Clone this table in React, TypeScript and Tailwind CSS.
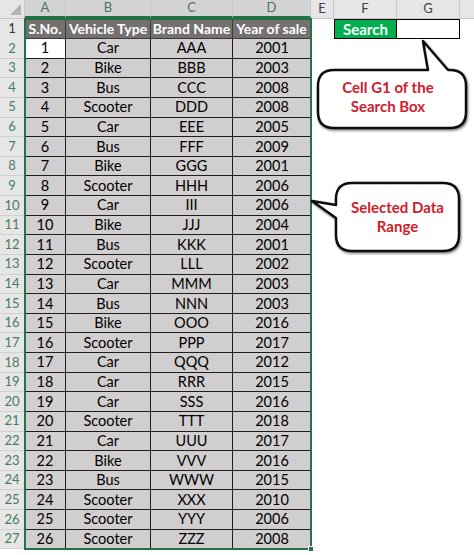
import React from "react";

const data: [number, string, string, number][] = [
  [1, "Car", "AAA", 2001],
  [2, "Bike", "BBB", 2003],
  [3, "Bus", "CCC", 2008],
  [4, "Scooter", "DDD", 2008],
  [5, "Car", "EEE", 2005],
  [6, "Bus", "FFF", 2009],
  [7, "Bike", "GGG", 2001],
  [8, "Scooter", "HHH", 2006],
  [9, "Car", "III", 2006],
  [10, "Bike", "JJJ", 2004],
  [11, "Bus", "KKK", 2001],
  [12, "Scooter", "LLL", 2002],
  [13, "Car", "MMM", 2003],
  [14, "Bus", "NNN", 2003],
  [15, "Bike", "OOO", 2016],
  [16, "Scooter", "PPP", 2017],
  [17, "Car", "QQQ", 2012],
  [18, "Car", "RRR", 2015],
  [19, "Car", "SSS", 2016],
  [20, "Scooter", "TTT", 2018],
  [21, "Car", "UUU", 2017],
  [22, "Bike", "VVV", 2016],
  [23, "Bus", "WWW", 2015],
  [24, "Scooter", "XXX", 2010],
  [25, "Scooter", "YYY", 2006],
  [26, "Scooter", "ZZZ", 2008],
];

const font = { fontFamily: "Lato, 'Open Sans', sans-serif" };

function ColHead({ label, w, sel }: { label: string; w: string; sel?: boolean }) {
  return (
    <div
      className={`${w} h-full flex items-center justify-center border-r border-[#c8c8c8] text-[13px] ${
        sel ? "bg-[#d3d3d3] text-[#4a7460] border-b-2 border-b-[#217346]" : "bg-[#e6e6e6] text-[#444]"
      }`}
    >
      {label}
    </div>
  );
}

export default function App() {
  return (
    <div className="relative w-[474px] h-[555px] bg-white overflow-hidden" style={font}>
      {/* column headers */}
      <div className="flex h-[19px] border-b border-[#c8c8c8]">
        <div className="w-[25px] h-full bg-[#e6e6e6] border-r border-[#c8c8c8] flex items-end justify-end p-[3px]">
          <svg width="11" height="11" viewBox="0 0 11 11">
            <polygon points="11,0 11,11 0,11" fill="#b4b4b4" />
          </svg>
        </div>
        <ColHead label="A" w="w-[41px]" sel />
        <ColHead label="B" w="w-[85px]" sel />
        <ColHead label="C" w="w-[82px]" sel />
        <ColHead label="D" w="w-[78px]" sel />
        <ColHead label="E" w="w-[23px]" />
        <ColHead label="F" w="w-[63px]" />
        <ColHead label="G" w="w-[63px]" />
        <div className="flex-1 h-full bg-[#e6e6e6]" />
      </div>

      {/* row 1 */}
      <div className="flex h-[20px]">
        <div className="w-[25px] h-full bg-[#e6e6e6] border-r border-[#c8c8c8] flex items-center justify-center text-[13px] text-[#333]">
          1
        </div>
        {[
          ["S.No.", "w-[41px]"],
          ["Vehicle Type", "w-[85px]"],
          ["Brand Name", "w-[82px]"],
          ["Year of sale", "w-[78px]"],
        ].map(([t, w]) => (
          <div
            key={t}
            className={`${w} h-full bg-[#767171] text-white font-bold text-[14px] flex items-center justify-center border-r border-b border-[#3a3a3a] whitespace-nowrap overflow-hidden`}
          >
            {t}
          </div>
        ))}
        <div className="w-[23px] h-full" />
        <div className="w-[63px] h-full bg-[#00b050] text-white font-bold text-[15px] flex items-center justify-center border border-black">
          Search
        </div>
        <div className="w-[63px] h-full bg-white border-y border-r border-black" />
        <div className="flex-1" />
      </div>

      {/* data rows */}
      {data.map(([n, v, b, y], i) => (
        <div key={n} className="flex h-[19.63px]">
          <div className="w-[25px] h-full bg-[#e6e6e6] border-r border-b border-[#d0d0d0] flex items-center justify-center text-[13px] text-[#4a7a60]">
            {i + 2}
          </div>
          <div
            className={`w-[41px] h-full ${i === 0 ? "bg-white" : "bg-[#d0cece]"} border-r border-b border-[#1e1e1e] flex items-center justify-center text-[14.5px] text-black`}
          >
            {n}
          </div>
          <div className="w-[85px] h-full bg-[#d0cece] border-r border-b border-[#1e1e1e] flex items-center justify-center text-[14.5px] text-black">
            {v}
          </div>
          <div className="w-[82px] h-full bg-[#d0cece] border-r border-b border-[#1e1e1e] flex items-center justify-center text-[14.5px] text-black">
            {b}
          </div>
          <div className="w-[78px] h-full bg-[#d0cece] border-b border-[#1e1e1e] flex items-center justify-center text-[14.5px] text-black">
            {y}
          </div>
          <div className="flex-1" />
        </div>
      ))}

      {/* selection border */}
      <div className="absolute left-[24px] top-[18px] w-[288px] h-[532px] border-2 border-[#217346] pointer-events-none" />
      <div className="absolute left-[308px] top-[546px] w-[6px] h-[6px] bg-[#217346] border border-white" />

      {/* callouts */}
      <svg className="absolute left-0 top-0 pointer-events-none" width="474" height="555" viewBox="0 0 474 555">
        <defs>
          <filter id="sh" x="-10%" y="-10%" width="130%" height="130%">
            <feDropShadow dx="1" dy="1.5" stdDeviation="0.8" floodColor="#000" floodOpacity="0.5" />
          </filter>
        </defs>
        <path
          d="M334 70 L428 70 L423 41 L448 70 L450 70 Q466 70 466 86 L466 112 Q466 128 450 128 L334 128 Q318 128 318 112 L318 86 Q318 70 334 70 Z"
          fill="white"
          stroke="#111"
          strokeWidth="2.5"
          strokeLinejoin="round"
          filter="url(#sh)"
        />
        <path
          d="M352 183 L443 183 Q459 183 459 199 L459 235 Q459 251 443 251 L352 251 Q336 251 336 235 L336 218 L312 201 L336 205 L336 199 Q336 183 352 183 Z"
          fill="white"
          stroke="#111"
          strokeWidth="2.5"
          strokeLinejoin="round"
          filter="url(#sh)"
        />
      </svg>
      <div className="absolute left-[316px] top-[78px] w-[144px] flex flex-col items-center text-[#d0202c] font-bold text-[15px] leading-[19px]">
        <span>Cell G1 of the</span>
        <span>Search Box</span>
      </div>
      <div className="absolute left-[336px] top-[198px] w-[123px] flex flex-col items-center text-[#d0202c] font-bold text-[15px] leading-[19px]">
        <span>Selected Data</span>
        <span>Range</span>
      </div>
    </div>
  );
}
